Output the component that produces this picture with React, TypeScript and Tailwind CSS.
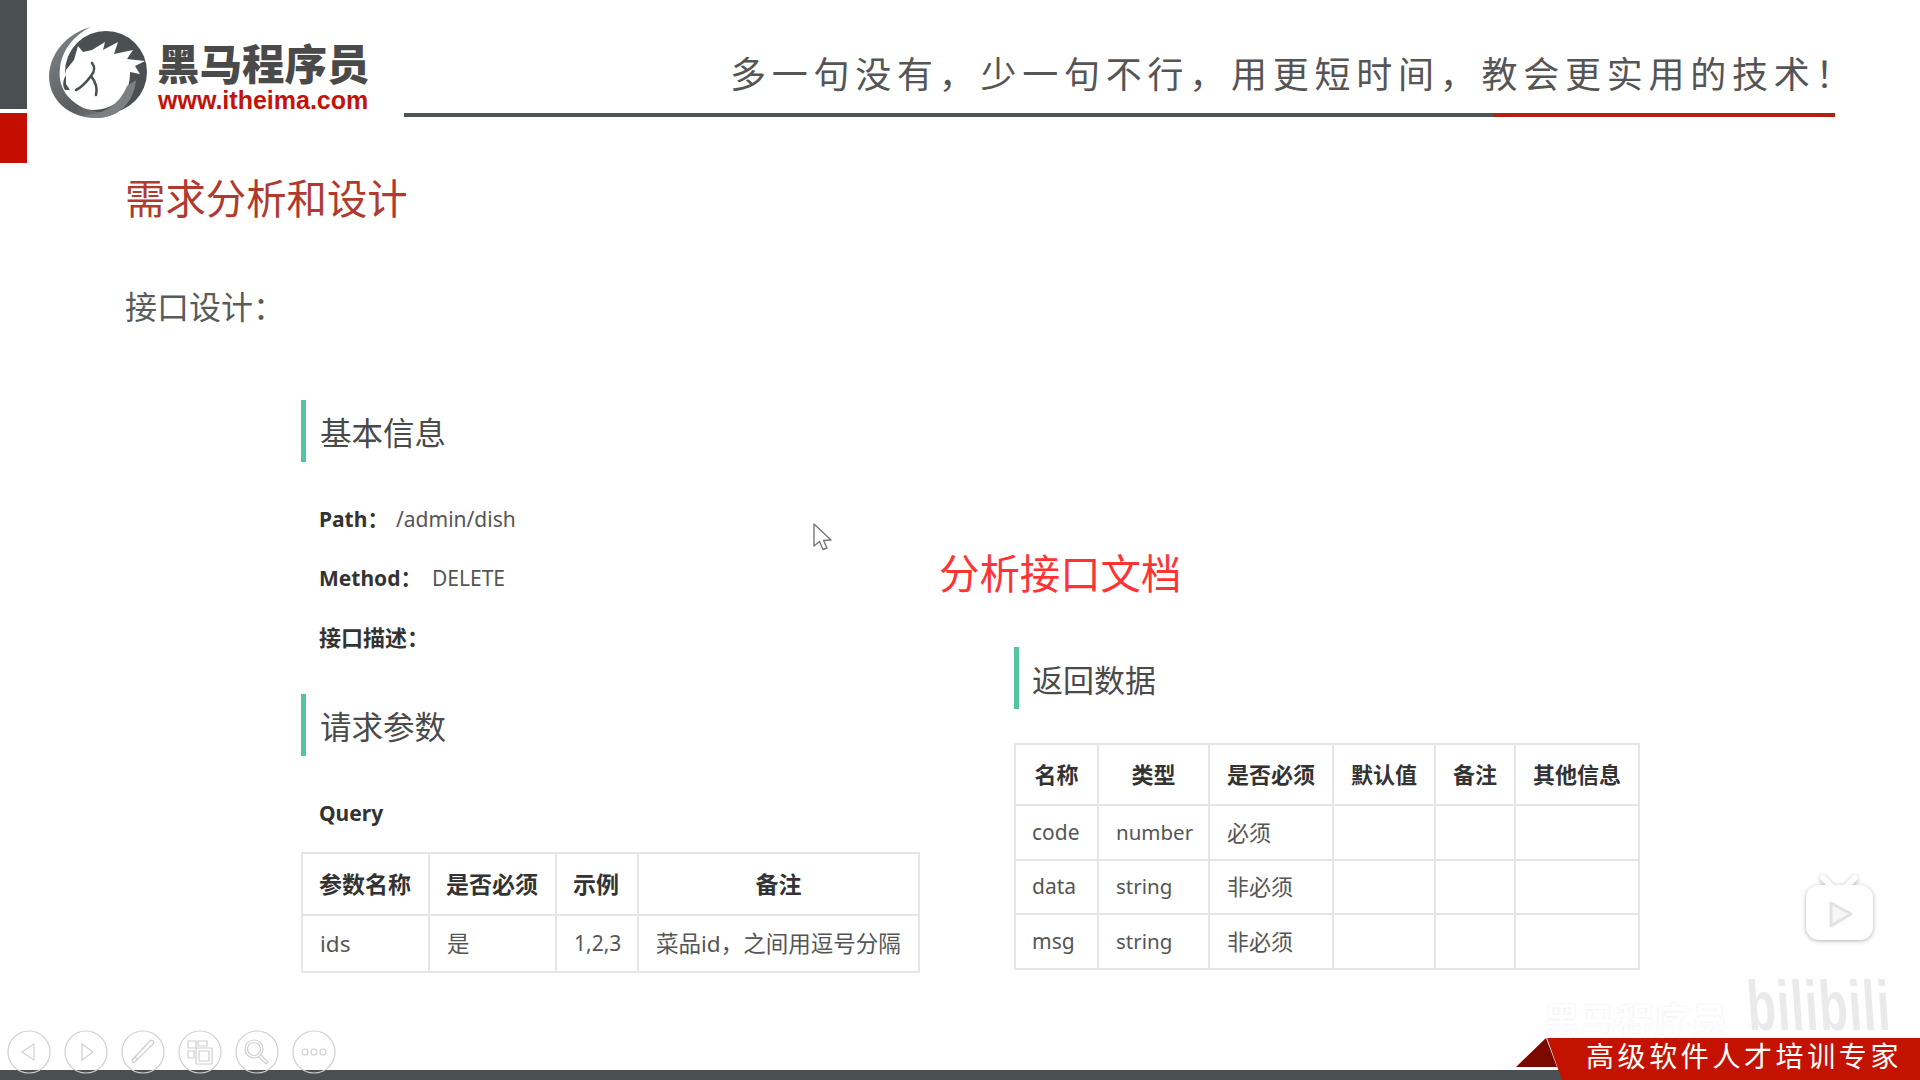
const cjk = "font-['Noto_Sans','Noto_Sans_CJK_SC',sans-serif]";

function Logo() {
  return (
    <svg width="110" height="110" viewBox="40 20 110 110" className="ml-[13px] mt-[20px] shrink-0">
      <defs>
        <linearGradient id="ring" x1="0" y1="0" x2="1" y2="1">
          <stop offset="0" stopColor="#84888a" />
          <stop offset="0.6" stopColor="#585c5e" />
          <stop offset="1" stopColor="#9a9d9f" />
        </linearGradient>
      </defs>
      <path d="M91 27 C68 33 50 52 49 76 C49 101 70 118 96 118 C120 118 134 101 136 80 L128 84 C124 100 110 110 94 109 C72 107 57 90 60 68 C62 50 74 35 91 27 Z" fill="url(#ring)" />
      <circle cx="106" cy="72" r="41" fill="#4a4f51" />
      <path d="M63 85 L66 70 L74 60 L78 46 L83 52 L92 50 L105 42 L103 50 L118 42 L114 54 L133 50 L127 59 L145 61 L135 66 L140 74 L130 72 C130 82 128 90 123 96 C116 106 104 110 92 110 C80 109 70 101 63 85 Z" fill="#fff" />
      <path d="M66 75 C63 80 62 85 65 90 L70 90 L66 84 Z" fill="#4a4f51" />
      <path d="M92 63 C96 68 94 72 91 76 C88 80 82 87 76 90 M91 76 C95 81 98 87 96 95" fill="none" stroke="#4a4f51" strokeWidth="2.6" strokeLinecap="round" />
      <path d="M136 80 C134 101 120 118 96 118 C92 118 88 117 84 116 C100 114 118 108 127 86 Z" fill="#7c8082" />
    </svg>
  );
}

function Heading({ children }: { children: string }) {
  return (
    <div className={`h-[62px] border-l-[5px] border-[#52c4a0] pl-[14px] text-[31.5px] leading-[66px] text-[#4a4a4a] ${cjk}`}>
      {children}
    </div>
  );
}

const cell = "border-2 border-[#e6e6e6]";
const thLeft = `${cell} px-[16px] font-bold text-[#333] text-[23px]`;
const tdLeft = `${cell} px-[17px] font-normal text-[#555] text-[22.5px] whitespace-nowrap`;
const thRight = `${cell} px-0 font-bold text-[#333] text-[22px] text-center`;
const tdRight = `${cell} pl-[16px] font-normal text-[#555] whitespace-nowrap`;

function NavButton({ children }: { children: React.ReactNode }) {
  return (
    <svg width="44" height="44" viewBox="0 0 44 44" fill="none" stroke="#cfcfcf" strokeWidth="1.2">
      <circle cx="22" cy="22" r="21" />
      {children}
    </svg>
  );
}

export default function App() {
  return (
    <div className={`relative flex h-[1080px] w-[1920px] flex-col overflow-hidden bg-white ${cjk}`}>
      <div className="flex flex-1">
        <div className="flex w-[27px] shrink-0 flex-col gap-[4px]">
          <div className="h-[109px] bg-[#4a4f51]" />
          <div className="h-[50px] bg-[#c40f00]" />
        </div>

        <div className="flex min-w-0 flex-1 flex-col">
          <header className="flex h-[117px]">
            <Logo />
            <div className="ml-[7px] w-[210px] shrink-0 pt-[42px]">
              <div className="whitespace-nowrap text-[42.5px] font-black leading-[44px] text-[#4a4a4a]">黑马程序员</div>
              <div className="ml-[1px] whitespace-nowrap font-['Liberation_Sans',sans-serif] text-[25px] font-bold leading-[28px] text-[#c4120a]">www.itheima.com</div>
            </div>
            <div className="ml-[37px] mr-[85px] flex min-w-0 flex-1 flex-col justify-end">
              <div className="mb-[13px] whitespace-nowrap pl-[326px] text-[36px] font-normal leading-[50px] tracking-[5.75px] text-[#555]">
                多一句没有，少一句不行，用更短时间，教会更实用的技术！
              </div>
              <div className="flex h-[4px]">
                <div className="flex-1 bg-[#4f5456]" />
                <div className="w-[341px] bg-[#b32014]" />
              </div>
            </div>
          </header>

          <h1 className="ml-[98px] mt-[54px] text-[40.4px] font-normal leading-[56px] text-[#b03a2e]">需求分析和设计</h1>
          <p className="ml-[98px] mt-[58px] text-[32px] leading-[44px] text-[#5a5a5a]">接口设计：</p>

          <div className="ml-[274px] mt-[71px] flex">
            <section className="w-[640px] shrink-0">
              <Heading>基本信息</Heading>
              <div className="mt-[42px] flex flex-col gap-[29px] pl-[18px] text-[21px] leading-[30px] text-[#555]">
                <div className="flex">
                  <span className="w-[77px] font-bold text-[#333]">Path：</span>
                  <span>/admin/dish</span>
                </div>
                <div className="flex">
                  <span className="w-[113px] font-bold text-[#333]">Method：</span>
                  <span>DELETE</span>
                </div>
                <div className="text-[22px] font-bold text-[#333]">接口描述：</div>
              </div>
              <div className="mt-[42px]">
                <Heading>请求参数</Heading>
              </div>
              <div className="mt-[42px] pl-[18px] text-[21px] font-bold leading-[30px] text-[#333]">Query</div>
              <table className="mt-[24px] w-[617px] table-fixed border-collapse">
                <colgroup>
                  <col className="w-[127px]" />
                  <col className="w-[127px]" />
                  <col className="w-[82px]" />
                  <col className="w-[281px]" />
                </colgroup>
                <thead>
                  <tr className="h-[62px]">
                    <th className={`${thLeft} text-left`}>参数名称</th>
                    <th className={`${thLeft} text-left`}>是否必须</th>
                    <th className={`${thLeft} text-left`}>示例</th>
                    <th className={`${thLeft} text-center`}>备注</th>
                  </tr>
                </thead>
                <tbody>
                  <tr className="h-[57px]">
                    <td className={tdLeft}>ids</td>
                    <td className={tdLeft}>是</td>
                    <td className={`${tdLeft} !text-[21px]`}>1,2,3</td>
                    <td className={tdLeft}>菜品id，之间用逗号分隔</td>
                  </tr>
                </tbody>
              </table>
            </section>

            <section className="flex-1 pt-[146px]">
              <div className="-ml-[2px] text-[40.4px] leading-[56px] text-[#ff3333]">分析接口文档</div>
              <div className="ml-[73px] mt-[45px]">
                <div className="[&>div]:!pl-[13px] [&>div]:!text-[31px]">
                  <Heading>返回数据</Heading>
                </div>
                <table className="mt-[34px] w-[624px] table-fixed border-collapse">
                  <colgroup>
                    <col className="w-[83px]" />
                    <col className="w-[111px]" />
                    <col className="w-[124px]" />
                    <col className="w-[102px]" />
                    <col className="w-[80px]" />
                    <col className="w-[124px]" />
                  </colgroup>
                  <thead>
                    <tr className="h-[61px]">
                      <th className={thRight}>名称</th>
                      <th className={thRight}>类型</th>
                      <th className={thRight}>是否必须</th>
                      <th className={thRight}>默认值</th>
                      <th className={thRight}>备注</th>
                      <th className={thRight}>其他信息</th>
                    </tr>
                  </thead>
                  <tbody>
                    {[
                      ["code", "number", "必须"],
                      ["data", "string", "非必须"],
                      ["msg", "string", "非必须"],
                    ].map((r) => (
                      <tr key={r[0]} className="h-[54.5px]">
                        <td className={`${tdRight} text-[21px]`}>{r[0]}</td>
                        <td className={`${tdRight} text-[20.5px] !pl-[17px]`}>{r[1]}</td>
                        <td className={`${tdRight} text-[22px] !pl-[17px]`}>{r[2]}</td>
                        <td className={tdRight} />
                        <td className={tdRight} />
                        <td className={tdRight} />
                      </tr>
                    ))}
                  </tbody>
                </table>
              </div>
            </section>
          </div>
        </div>
      </div>

      <footer className="h-[10px] shrink-0 bg-[#4a4f51]" />

      {/* mouse cursor */}
      <svg width="20" height="28" viewBox="0 0 20 28" className="absolute left-[813px] top-[523px]" fill="#fff" stroke="#777" strokeWidth="1.4" strokeLinejoin="round">
        <path d="M1 1 L1 23 L6.5 18.5 L10 26.5 L14 25 L10.5 17.5 L18 17 Z" />
      </svg>

      {/* slide-show controls */}
      <div className="absolute left-[7px] top-[1030px] flex gap-[13px]">
        <NavButton><path d="M27 14 L15 22 L27 30 Z" /></NavButton>
        <NavButton><path d="M18 14 L29 22 L18 30 Z" /></NavButton>
        <NavButton>
          <path d="M12 33 L11 30 L29 11 C31 9 34 12 32 14 L14 32 Z M14 27 L17 30" />
        </NavButton>
        <NavButton>
          <path d="M10 11 H18 V18 H10 Z M20 11 H29 V16 H20 Z M10 21 H16 V28 H10 Z M18 18 H34 V34 H18 Z M21 21 H31 V31 H21 Z" />
        </NavButton>
        <NavButton>
          <circle cx="19" cy="19" r="9" />
          <circle cx="19" cy="19" r="6.5" />
          <path d="M26 25 L33 32 L31 34 L24 27" />
        </NavButton>
        <NavButton>
          <circle cx="13" cy="22" r="3" />
          <circle cx="22" cy="22" r="3" />
          <circle cx="31" cy="22" r="3" />
        </NavButton>
      </div>

      {/* player button */}
      <svg width="72" height="70" viewBox="0 0 72 70" className="absolute left-[1804px] top-[875px] drop-shadow-[0_1px_2px_rgba(0,0,0,0.3)]">
        <path d="M19 3 L29 13 M51 3 L41 13" stroke="#fff" strokeWidth="6" strokeLinecap="round" />
        <rect x="2" y="10" width="67" height="55" rx="13" fill="#fff" />
        <path d="M27 28 L47 39 L27 51 Z" fill="#f7f7f7" stroke="#e2e2e2" strokeWidth="3" strokeLinejoin="round" />
      </svg>

      {/* video watermark */}
      <div className="absolute left-[1543px] top-[996px] text-[37px] font-bold leading-[50px] text-white [text-shadow:0_0_2px_#e6e6e6]">黑马程序员</div>

      {/* bottom-right banner */}
      <svg width="42" height="30" viewBox="0 0 42 30" className="absolute left-[1516px] top-[1038px]">
        <path d="M30 0 L0 29 L41 29 Z" fill="#7a0a00" />
      </svg>
      <div className="absolute left-[1516px] top-[1067px] h-[3px] w-[44px] bg-white" />
      <div className="absolute left-[1547px] top-[1038px] flex h-[42px] w-[373px] items-center bg-[#c41200] pb-[6px] pl-[39px] text-[28px] leading-[36px] tracking-[3.6px] text-white [clip-path:polygon(0_0,100%_0,100%_100%,15px_100%)]">
        <span className="whitespace-nowrap">高级软件人才培训专家</span>
      </div>

      <div className="absolute left-[1747px] top-[976px] origin-left scale-y-[1.5] skew-x-[6deg] font-['Liberation_Sans',sans-serif] text-[47px] font-bold leading-[60px] tracking-[1px] text-[rgba(222,222,222,0.65)]">bilibili</div>
    </div>
  );
}
